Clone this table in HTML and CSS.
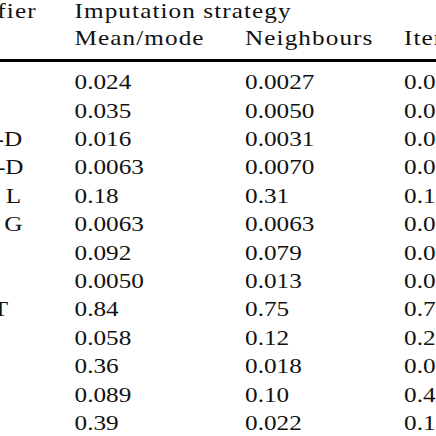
FILE: index.html
```html
<!DOCTYPE html>
<html lang="en">
<head>
<meta charset="utf-8">
<title>Imputation strategy table</title>
<link rel="stylesheet" href="styles.css">
</head>
<body>
<div class="viewport">
  <div class="sheet">
    <div class="grid head">
      <div class="label hd">Classifier</div>
      <div class="span hd">Imputation strategy</div>
      <div class="label"></div>
      <div class="hd">Mean/mode</div>
      <div class="hd">Neighbours</div>
      <div class="hd">Iterative</div>
    </div>
    <div class="grid body">
      <div class="label">LR</div><div>0.024</div><div>0.0027</div><div>0.021</div>
      <div class="label">GP</div><div>0.035</div><div>0.0050</div><div>0.039</div>
      <div class="label">LDA-D</div><div>0.016</div><div>0.0031</div><div>0.018</div>
      <div class="label">QDA-D</div><div>0.0063</div><div>0.0070</div><div>0.0058</div>
      <div class="label">SVM L</div><div>0.18</div><div>0.31</div><div>0.15</div>
      <div class="label">SVM G</div><div>0.0063</div><div>0.0063</div><div>0.0071</div>
      <div class="label">DT</div><div>0.092</div><div>0.079</div><div>0.085</div>
      <div class="label">RF</div><div>0.0050</div><div>0.013</div><div>0.0094</div>
      <div class="label">GBT</div><div>0.84</div><div>0.75</div><div>0.79</div>
      <div class="label">ET</div><div>0.058</div><div>0.12</div><div>0.21</div>
      <div class="label">PA</div><div>0.36</div><div>0.018</div><div>0.042</div>
      <div class="label">RR</div><div>0.089</div><div>0.10</div><div>0.45</div>
      <div class="label">LP</div><div>0.39</div><div>0.022</div><div>0.17</div>
    </div>
  </div>
</div>
</body>
</html>
```

FILE: styles.css
```css
html, body {
  margin: 0;
  padding: 0;
  overflow: hidden;
  background: #ffffff;
}

body {
  width: 436px;
  height: 436px;
}

.viewport {
  width: 363.33px;
  transform: scaleX(1.2);
  transform-origin: 0 0;
  font-family: "Liberation Serif", "Times New Roman", serif;
  font-size: 21px;
  color: #111111;
}

.sheet {
  margin-left: -64.2px;
  margin-top: -1.6px;
  width: 540px;
}

.grid {
  display: grid;
  grid-template-columns: 126.3px 142.1px 132.5px 130px;
  white-space: nowrap;
}

.label {
  padding-right: 26.3px;
  text-align: center;
}

.span {
  grid-column: 2 / 5;
}

.hd {
  letter-spacing: 0.9px;
}

.head {
  line-height: 27px;
  padding-bottom: 6.6px;
  border-bottom: 3px solid #000000;
}

.body {
  padding-top: 6.2px;
  line-height: 28.4px;
}
```
